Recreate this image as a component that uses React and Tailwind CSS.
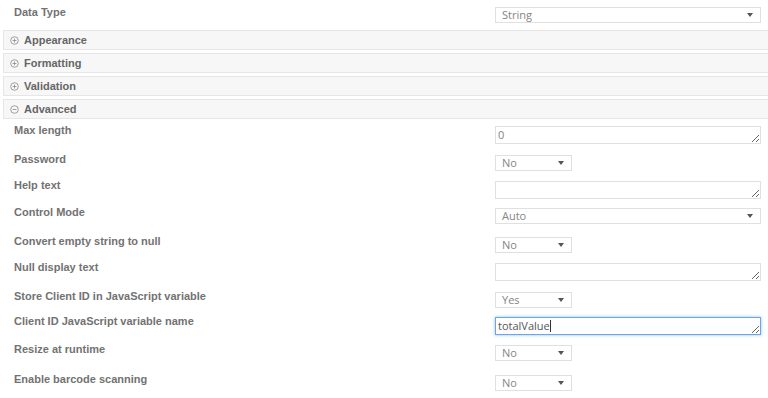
import React from "react";

const labelCls =
  "w-[495px] shrink-0 pl-[14px] text-[11px] leading-[14px] font-bold text-[#727272] [font-family:'Liberation_Sans',Arial,sans-serif]";

function Arrow() {
  return (
    <svg width="6" height="5" viewBox="0 0 6 5" className="absolute right-[7px] top-1/2 -translate-y-1/2">
      <path d="M0 0.5 L6 0.5 L3 4.5 Z" fill="#555" />
    </svg>
  );
}

function Select({ value, wide }) {
  return (
    <div
      className={`relative ${wide ? "w-[266px]" : "w-[77px]"} h-[16px] border border-[#e0e0e0] bg-white pl-[6px] text-[11px] leading-[14px] text-[#858585] [font-family:'Open_Sans',sans-serif]`}
    >
      {value}
      <Arrow />
    </div>
  );
}

function TextArea({ value = "", focused }) {
  return (
    <div className="relative w-[266px] h-[18px]">
      <textarea
        readOnly
        value={value}
        rows={1}
        className={`block w-[266px] h-[18px] box-border overflow-hidden border ${
          focused
            ? "border-[#6aa6e8] shadow-[0_0_3px_rgba(102,160,233,0.7)] text-[#555]"
            : "border-[#e0e0e0] text-[#858585]"
        } bg-white pl-[2px] py-[1px] text-[11px] leading-[14px] outline-none [font-family:'Open_Sans',sans-serif]`}
      />
      {focused && (
        <span className="absolute left-[55px] top-[3px] w-[1px] h-[12px] bg-[#333]" />
      )}
    </div>
  );
}

function Header({ title, open }) {
  return (
    <div className="ml-[3px] h-[20px] flex items-center border border-[#e6e6e6] border-r-0 bg-[#f7f7f7]">
      <svg width="9" height="9" viewBox="0 0 9 9" className="ml-[6px] mr-[5px]">
        <circle cx="4.5" cy="4.5" r="3.8" fill="none" stroke="#8a8a8a" strokeWidth="0.8" />
        <line x1="2.6" y1="4.5" x2="6.4" y2="4.5" stroke="#8a8a8a" strokeWidth="0.8" />
        {!open && <line x1="4.5" y1="2.6" x2="4.5" y2="6.4" stroke="#8a8a8a" strokeWidth="0.8" />}
      </svg>
      <span className="text-[11px] leading-[14px] font-bold text-[#666] [font-family:'Liberation_Sans',Arial,sans-serif]">
        {title}
      </span>
    </div>
  );
}

const rows = [
  { label: "Max length", type: "ta", value: "0", h: "h-[29px]" },
  { label: "Password", type: "sel", value: "No", h: "h-[26px]" },
  { label: "Help text", type: "ta", value: "", h: "h-[27px]" },
  { label: "Control Mode", type: "wide", value: "Auto", h: "h-[29px]" },
  { label: "Convert empty string to null", type: "sel", value: "No", h: "h-[26px]" },
  { label: "Null display text", type: "ta", value: "", h: "h-[29px]" },
  { label: "Store Client ID in JavaScript variable", type: "sel", value: "Yes", h: "h-[25px]" },
  { label: "Client ID JavaScript variable name", type: "focus", value: "totalValue", h: "h-[28px]" },
  { label: "Resize at runtime", type: "sel", value: "No", h: "h-[30px]" },
  { label: "Enable barcode scanning", type: "sel", value: "No", h: "h-[26px]" },
];

export default function App() {
  return (
    <div className="w-[768px] h-[398px] overflow-hidden bg-white">
      <div className="h-[30px] flex items-start">
        <div className={`${labelCls} mt-[5px]`}>Data Type</div>
        <div className="mt-[7px]">
          <Select value="String" wide />
        </div>
      </div>
      <div className="flex flex-col gap-[3px]">
        <Header title="Appearance" />
        <Header title="Formatting" />
        <Header title="Validation" />
        <Header title="Advanced" open />
      </div>
      <div className="mt-[4px] flex flex-col">
        {rows.map((r) => (
          <div key={r.label} className={`${r.h} flex items-start`}>
            <div className={labelCls}>{r.label}</div>
            <div className="mt-[3px]">
              {r.type === "ta" && <TextArea value={r.value} />}
              {r.type === "focus" && <TextArea value={r.value} focused />}
              {r.type === "sel" && <Select value={r.value} />}
              {r.type === "wide" && <Select value={r.value} wide />}
            </div>
          </div>
        ))}
      </div>
    </div>
  );
}
